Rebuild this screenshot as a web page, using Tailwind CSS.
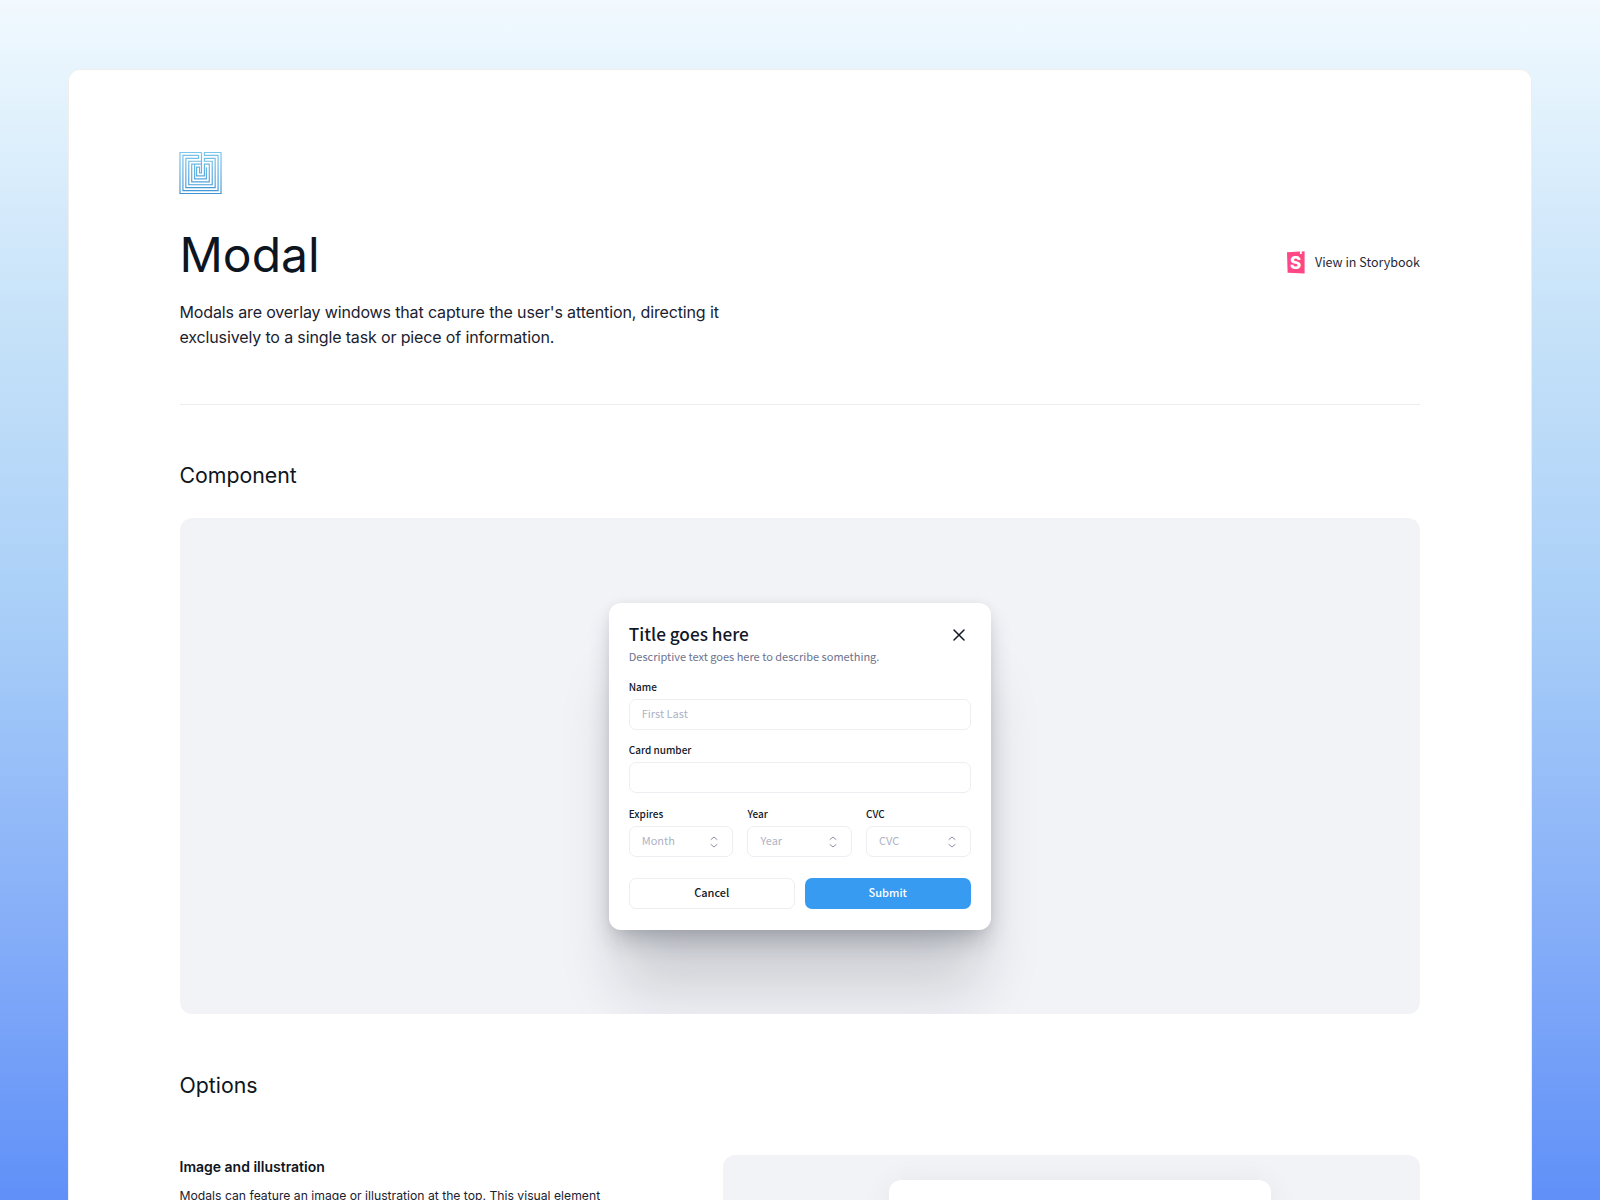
<!DOCTYPE html>
<html>
<head>
<meta charset="utf-8">
<script src="https://cdn.jsdelivr.net/npm/@tailwindcss/browser@4"></script>
</head>
<body class="m-0">
<div class="h-[1200px] overflow-hidden pt-[69px] px-[68px] bg-[linear-gradient(180deg,#f2f9ff_0px,#e6f4fd_76px,#c8e3f9_306px,#a9cff8_612px,#87aff8_918px,#6090f8_1200px)] font-['Inter',sans-serif] text-[#0d1520]">
  <main class="h-[1400px] bg-white rounded-t-[12px] border border-[#eeeeec] border-b-0 pt-[82px] pl-[110.5px] pr-[111px]">
    <svg class="block -ml-[1px] w-[43px] h-[42px]" viewBox="0 0 43 43" fill="none" stroke="url(#lg)" stroke-width="1.2">
      <defs><linearGradient id="lg" x1="0" y1="0" x2="0" y2="43" gradientUnits="userSpaceOnUse"><stop offset="0" stop-color="#7cc7ee"/><stop offset="1" stop-color="#3f93d4"/></linearGradient></defs>
      <path d="M22.5 .5H.5V42.5H42.5V.5H25.5V3.5H39.5V39.5H3.5V3.5H19.5V6.5H6.5V36.5H36.5V6.5H25.5V9.5H33.5V33.5H9.5V9.5H22.5V12.5H12.5V30.5H30.5V12.5H25.5V24.5H17.5V15.5H20.5V21.5H22.5V.5"/>
      <path d="M15.5 12.5V27.5H27.5V15.5"/>
    </svg>
    <div class="flex justify-between items-start mt-[29px] pb-[55px] border-b border-[#eceef0]">
      <div>
        <h1 class="m-0 text-[48px] leading-[64px] font-normal">Modal</h1>
        <p class="m-0 mt-[13px] text-[16px] leading-[24.5px] tracking-[-0.14px] w-[560px] text-[#1a2230]">Modals are overlay windows that capture the user's attention, directing it exclusively to a single task or piece of information.</p>
      </div>
      <a class="flex items-center gap-[10px] mt-[27px] text-[12.5px] leading-[24px] text-[#1f2937] font-['Noto_Sans_CJK_SC',sans-serif]">
        <svg class="w-[19px] h-[23px]" viewBox="0 0 19 23"><path d="M1 1.2 14 .5l-.1 2.6 1.8-.1.1-2.6L18.6.3V22.6L1.6 21.8Z" fill="#ff4785"/><text x="9.7" y="18" text-anchor="middle" font-size="17" font-weight="800" fill="#fff" font-family="Inter, sans-serif">S</text></svg>
        View in Storybook
      </a>
    </div>
    <h2 class="m-0 mt-[54px] text-[21.3px] leading-[32px] font-normal">Component</h2>
    <section class="mt-[27px] h-[496px] rounded-[12px] bg-[#f2f3f7] overflow-hidden flex justify-center pt-[85px]">
      <div class="w-[382px] h-[327px] bg-white rounded-[12px] shadow-[0_14px_24px_-4px_rgba(17,24,39,0.24),0_0_12px_rgba(17,24,39,0.05),0_70px_60px_-10px_rgba(17,24,39,0.16)] px-[20px] pt-[19px] font-['Noto_Sans_CJK_SC',sans-serif] text-[#111827]">
        <div class="flex justify-between items-center h-[24px]">
          <div class="text-[17.2px] leading-[24px] font-medium">Title goes here</div>
          <svg class="w-[16px] h-[16px] mr-[4px] mt-[1px]" viewBox="0 0 16 16" fill="none" stroke="#111827" stroke-width="1.5" stroke-linecap="round"><path d="M3 3 13 13M13 3 3 13"/></svg>
        </div>
        <p class="m-0 text-[11px] leading-[20px] text-[#6b7390]">Descriptive text goes here to describe something.</p>
        <label class="block mt-[13px] text-[10px] leading-[16px] font-medium">Name</label>
        <div class="mt-[4px] h-[31px] rounded-[7px] border border-[#eceef2] px-[12px] text-[11px] leading-[27px] text-[#adb3c6]">First Last</div>
        <label class="block mt-[12px] text-[10px] leading-[16px] font-medium">Card number</label>
        <div class="mt-[4px] h-[31px] rounded-[7px] border border-[#eceef2]"></div>
        <div class="grid grid-cols-3 gap-[14px] mt-[13px]">
          <div>
            <label class="block text-[10px] leading-[16px] font-medium">Expires</label>
            <div class="mt-[4px] h-[31px] rounded-[7px] border border-[#eceef2] pl-[12px] pr-[14px] flex items-center justify-between text-[11px] text-[#adb3c6]">
              <span class="pb-[2px]">Month</span>
              <svg class="w-[8px] h-[12px]" viewBox="0 0 8 12" fill="none" stroke="#8b91a6" stroke-width="1" stroke-linecap="round" stroke-linejoin="round"><path d="M1 3.5 4 1l3 2.5M1 8.5 4 11l3-2.5"/></svg>
            </div>
          </div>
          <div>
            <label class="block text-[10px] leading-[16px] font-medium">Year</label>
            <div class="mt-[4px] h-[31px] rounded-[7px] border border-[#eceef2] pl-[12px] pr-[14px] flex items-center justify-between text-[11px] text-[#adb3c6]">
              <span class="pb-[2px]">Year</span>
              <svg class="w-[8px] h-[12px]" viewBox="0 0 8 12" fill="none" stroke="#8b91a6" stroke-width="1" stroke-linecap="round" stroke-linejoin="round"><path d="M1 3.5 4 1l3 2.5M1 8.5 4 11l3-2.5"/></svg>
            </div>
          </div>
          <div>
            <label class="block text-[10px] leading-[16px] font-medium">CVC</label>
            <div class="mt-[4px] h-[31px] rounded-[7px] border border-[#eceef2] pl-[12px] pr-[14px] flex items-center justify-between text-[11px] text-[#adb3c6]">
              <span class="pb-[2px]">CVC</span>
              <svg class="w-[8px] h-[12px]" viewBox="0 0 8 12" fill="none" stroke="#8b91a6" stroke-width="1" stroke-linecap="round" stroke-linejoin="round"><path d="M1 3.5 4 1l3 2.5M1 8.5 4 11l3-2.5"/></svg>
            </div>
          </div>
        </div>
        <div class="grid grid-cols-2 gap-[10px] mt-[21px]">
          <button class="h-[31px] pb-[2px] rounded-[7px] border border-[#eceef2] bg-white text-[11px] font-medium text-[#111827]">Cancel</button>
          <button class="h-[31px] pb-[2px] rounded-[7px] bg-[#369bf1] text-[11px] font-medium text-white">Submit</button>
        </div>
      </div>
    </section>
    <h2 class="m-0 mt-[55px] text-[21.3px] leading-[32px] font-normal">Options</h2>
    <div class="flex justify-between mt-[54px]">
      <div class="w-[450px]">
        <h3 class="m-0 mt-[2px] text-[14px] leading-[20px] font-semibold">Image and illustration</h3>
        <p class="m-0 mt-[8px] text-[12.2px] leading-[22px] text-[#1a2230]">Modals can feature an image or illustration at the top. This visual element</p>
      </div>
      <div class="w-[697px] h-[300px] rounded-[12px] bg-[#f2f3f7] overflow-hidden flex justify-center pt-[25px] pl-[17px]">
        <div class="w-[382px] h-[300px] bg-white rounded-[12px] shadow-[0_2px_30px_rgba(17,24,39,0.06)]"></div>
      </div>
    </div>
  </main>
</div>
</body>
</html>
